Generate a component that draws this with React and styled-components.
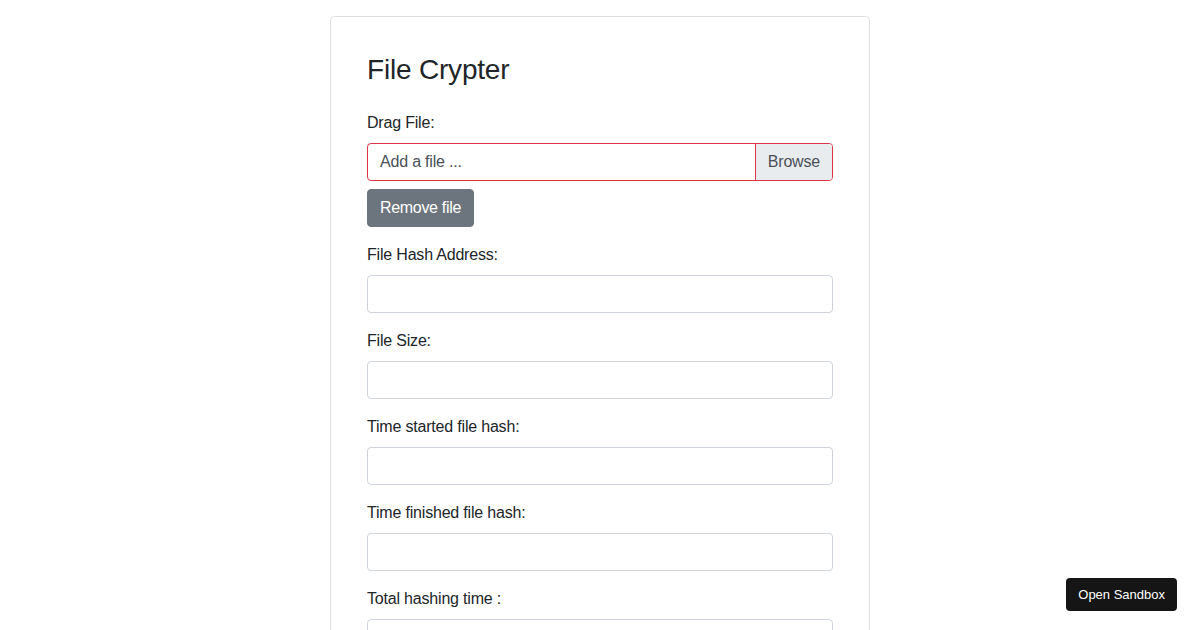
import React from 'react'
import styled, { createGlobalStyle } from 'styled-components'

const GlobalStyle = createGlobalStyle`
  * { box-sizing: border-box; }
  body {
    margin: 0;
    background: #fff;
    color: #212529;
    font-family: "Liberation Sans", Arial, sans-serif;
    font-size: 16px;
    line-height: 1.5;
    letter-spacing: -0.012em;
  }
`

const Page = styled.div`
  display: flex;
  justify-content: center;
  padding-top: 16px;
`

const Card = styled.div`
  width: 540px;
  border: 1px solid rgba(0, 0, 0, 0.125);
  border-radius: 4px;
  padding: 36px 36px 0;
  min-height: 700px;
`

const Title = styled.h3`
  margin: 0 0 24px;
  font-size: 28px;
  font-weight: 400;
  line-height: 1.2;
`

const Group = styled.div`
  margin-bottom: 16px;
`

const Label = styled.label`
  display: block;
  margin-bottom: 8px;
`

const Input = styled.input`
  display: block;
  width: 100%;
  height: 38px;
  padding: 6px 12px;
  font: inherit;
  color: #495057;
  background: #fff;
  border: 1px solid #ced4da;
  border-radius: 4px;
  outline: none;
`

const FileBox = styled.div`
  display: flex;
  height: 38px;
  border: 1px solid #dc3545;
  border-radius: 4px;
  overflow: hidden;
`

const FileText = styled.span`
  flex: 1;
  padding: 6px 12px;
  color: #495057;
`

const Browse = styled.span`
  padding: 6px 12px;
  background: #e9ecef;
  color: #495057;
  border-left: 1px solid #dc3545;
`

const Button = styled.button`
  margin-top: 8px;
  height: 38px;
  padding: 6px 12px;
  font: inherit;
  letter-spacing: -0.02em;
  color: #fff;
  background: #6c757d;
  border: 1px solid #6c757d;
  border-radius: 4px;
`

const SandboxBtn = styled.a`
  position: fixed;
  right: 23px;
  bottom: 19px;
  padding: 8px 12px;
  background: #151515;
  color: #fff;
  font-size: 13px;
  line-height: 17px;
  letter-spacing: normal;
  border-radius: 4px;
  text-decoration: none;
`

const fields = [
  'File Hash Address:',
  'File Size:',
  'Time started file hash:',
  'Time finished file hash:',
  'Total hashing time :',
]

export default function App() {
  return (
    <>
      <GlobalStyle />
      <Page>
        <Card>
          <Title>File Crypter</Title>
          <Group>
            <Label>Drag File:</Label>
            <FileBox>
              <FileText>Add a file ...</FileText>
              <Browse>Browse</Browse>
            </FileBox>
            <Button>Remove file</Button>
          </Group>
          {fields.map(f => (
            <Group key={f}>
              <Label>{f}</Label>
              <Input />
            </Group>
          ))}
        </Card>
      </Page>
      <SandboxBtn>Open Sandbox</SandboxBtn>
    </>
  )
}
